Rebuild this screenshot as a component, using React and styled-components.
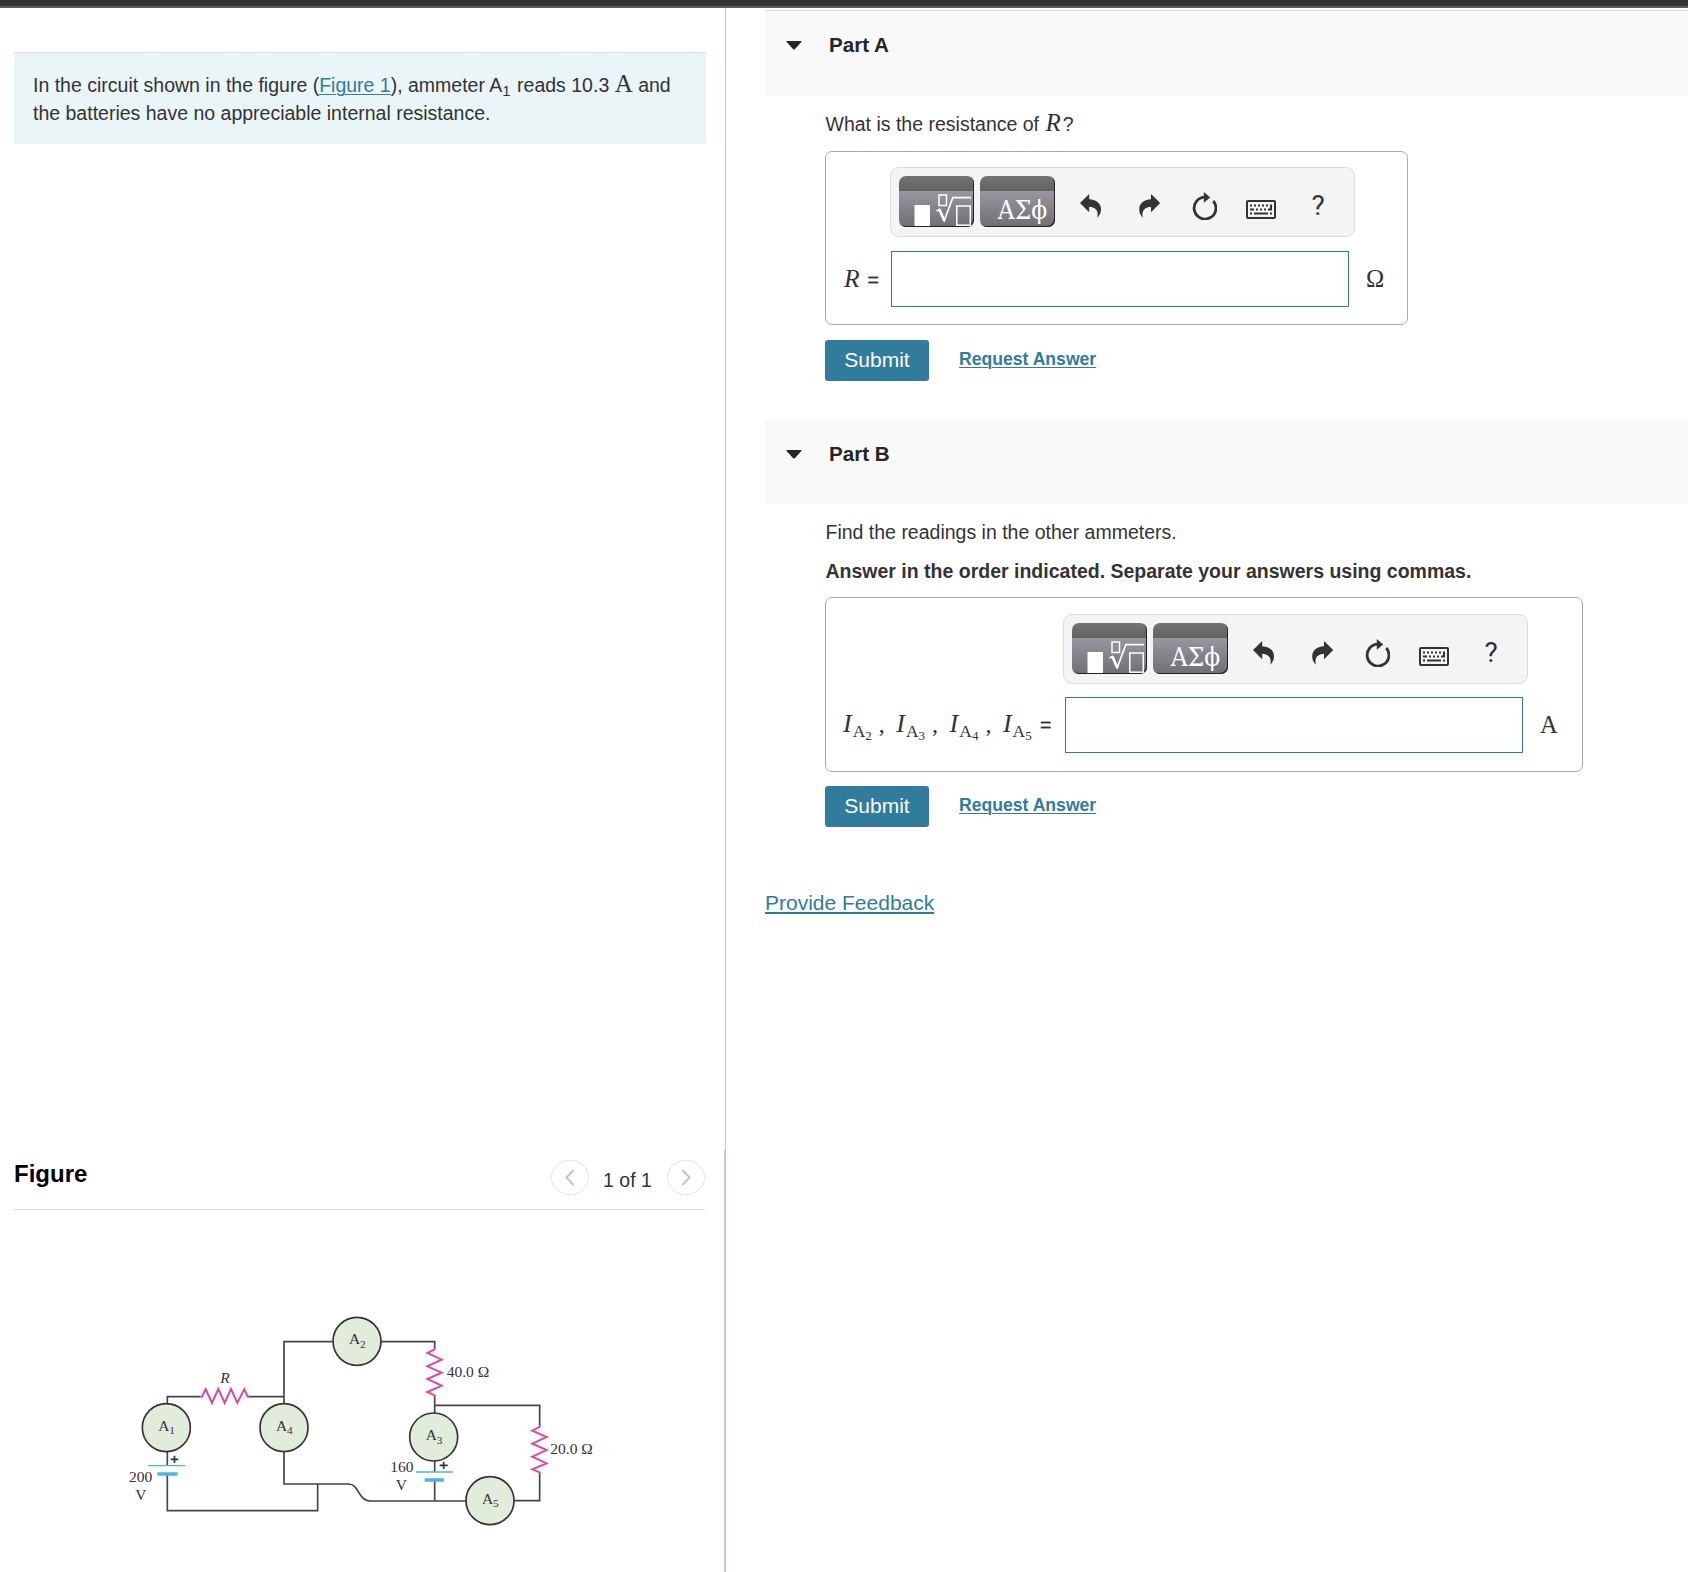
import React from "react";
import styled, { createGlobalStyle } from "styled-components";

export default function App() {
  return (
    <>
      <GlobalStyle />
      <TopBar />
      <Page>
        <LeftPanel>
          <Problem>
            <Intro>
              In the circuit shown in the figure (<Link href="#figure">Figure 1</Link>), ammeter A<Sub>1</Sub> reads 10.3{" "}
              <Math $size={25}>A</Math> and
              <br />
              the batteries have no appreciable internal resistance.
            </Intro>
          </Problem>
          <FigurePane id="figure">
            <FigureHeader>
              <h2>Figure</h2>
              <Pager>
                <PagerButton aria-label="Previous">
                  <svg width="10" height="17" viewBox="0 0 10 17">
                    <path d="M8.5 1 L1.5 8.5 L8.5 16" />
                  </svg>
                </PagerButton>
                <span>1 of 1</span>
                <PagerButton aria-label="Next">
                  <svg width="10" height="17" viewBox="0 0 10 17">
                    <path d="M1.5 1 L8.5 8.5 L1.5 16" />
                  </svg>
                </PagerButton>
              </Pager>
            </FigureHeader>
            <Circuit />
          </FigurePane>
        </LeftPanel>

        <RightPanel>
          <PartHeader title="Part A" height={86} bordered />
          <PartBody $top={16}>
            <Question>
              What is the resistance of <Math $size={25} $italic $wide>R</Math>?
            </Question>
            <AnswerBox $width={583} $height={174} $top={15} $pad={15}>
              <Toolbar inset={28} />
              <AnswerRow $gap={14}>
                <AnswerLabel $width={48}>
                  <Math $size={25.5} $italic $wide>R</Math>
                  <Equals $left={6}>=</Equals>
                </AnswerLabel>
                <AnswerInput />
                <Unit>Ω</Unit>
              </AnswerRow>
            </AnswerBox>
            <Actions gap={15} />
          </PartBody>

          <Spacer $height={39} />

          <PartHeader title="Part B" height={84} />
          <PartBody $top={16}>
            <Question>Find the readings in the other ammeters.</Question>
            <Instruction>Answer in the order indicated. Separate your answers using commas.</Instruction>
            <AnswerBox $width={758} $height={175} $top={14} $pad={16}>
              <Toolbar inset={29} />
              <AnswerRow $gap={13}>
                <AnswerLabel $width={222}>
                  {[2, 3, 4, 5].map((n) => (
                    <Current key={n} index={n} last={n === 5} />
                  ))}
                  <Equals $left={0}>=</Equals>
                </AnswerLabel>
                <AnswerInput />
                <Unit>A</Unit>
              </AnswerRow>
            </AnswerBox>
            <Actions gap={14} />
          </PartBody>

          <Feedback href="#feedback">Provide Feedback</Feedback>
        </RightPanel>
      </Page>
    </>
  );
}

function PartHeader({ title, height, bordered }) {
  return (
    <PartHeaderStyle $height={height} $bordered={bordered}>
      <svg width="16" height="9" viewBox="0 0 16 9">
        <path d="M1 0 H15 Q16 0 15.4 1 L8.8 8.3 Q8 9 7.2 8.3 L0.6 1 Q0 0 1 0 Z" fill="#252525" />
      </svg>
      <h3>{title}</h3>
    </PartHeaderStyle>
  );
}

function Current({ index, last }) {
  return (
    <CurrentStyle>
      <Math $size={26} $italic>I</Math>
      <span className="name">A</span>
      <span className="index">{index}</span>
      {!last && <span className="comma">,</span>}
    </CurrentStyle>
  );
}

function Actions({ gap }) {
  return (
    <ActionsStyle $top={gap}>
      <Submit>Submit</Submit>
      <Request href="#answer">Request Answer</Request>
    </ActionsStyle>
  );
}

function Toolbar({ inset }) {
  return (
    <ToolbarStyle $inset={inset}>
      <Palette aria-label="Templates">
        <svg width="75" height="51" viewBox="0 0 75 51">
          <rect x="15.5" y="29" width="15.5" height="21" fill="#fff" />
          <g fill="none" stroke="#fff">
            <rect x="40" y="19" width="7.5" height="10.5" strokeWidth="1.5" />
            <path d="M37.5 35 L40.5 33.5 L45.3 44.5 L53.8 21.7 H72" strokeWidth="1.7" />
            <path d="M40.5 33.5 L45.3 45" strokeWidth="2.6" />
            <rect x="57.8" y="30" width="13.5" height="19.2" strokeWidth="1.5" />
          </g>
        </svg>
      </Palette>
      <Palette aria-label="Symbols">
        <span>ΑΣϕ</span>
      </Palette>
      <Tool $left={25} $top={18} aria-label="Undo">
        <svg width="22" height="24" viewBox="0 0 22 24">
          <path d="M0 9 L9.2 0 V5.3 C16.5 5.6 21 9.5 21 15.5 C21 19 19.5 21.5 17.2 23.7 C18.3 20 18.4 13.3 9.2 12.7 V18.3 Z" />
        </svg>
      </Tool>
      <Tool $left={37} $top={18} aria-label="Redo">
        <svg width="22" height="24" viewBox="0 0 22 24">
          <path d="M21.2 9 L12 0 V5.3 C4.7 5.6 0.2 9.5 0.2 15.5 C0.2 19 1.5 21.5 4 23.7 C2.9 20 2.8 13.3 12 12.7 V18.3 Z" />
        </svg>
      </Tool>
      <Tool $left={31} $top={16} aria-label="Reset">
        <svg width="25" height="28" viewBox="0 0 25 28">
          <path d="M13 5.2 A10.9 10.9 0 1 0 21.3 9" fill="none" stroke="#333" strokeWidth="2.8" />
          <path d="M11.8 0 L18.2 5.5 L11.8 10.8 Z" />
        </svg>
      </Tool>
      <Tool $left={29} $top={24} aria-label="Keyboard shortcuts">
        <svg width="30" height="19" viewBox="0 0 30 19">
          <rect x="1" y="1" width="28" height="17" rx="1" fill="none" stroke="#333" strokeWidth="2" />
          <path d="M4 4.5h2v2H4z M8 4.5h2v2H8z M12 4.5h2v2h-2z M16 4.5h2v2h-2z M20 4.5h2v2h-2z M24 4.5h2v6h-4v-2h2z" />
          <path d="M4 8.5h4v2H4z M10 8.5h2v2h-2z M14 8.5h2v2h-2z M18 8.5h2v2h-2z" />
          <path d="M4 12.5h2v2H4z M8 12.5h14v2H8z M24 12.5h2v2h-2z" />
        </svg>
      </Tool>
      <Help $left={35.5} $top={13}>?</Help>
    </ToolbarStyle>
  );
}

const ammeters = [
  { n: 1, x: 169, y: 413 },
  { n: 2, x: 741, y: 154 },
  { n: 3, x: 971, y: 441 },
  { n: 4, x: 522, y: 413 },
  { n: 5, x: 1140, y: 632 },
];

function Circuit() {
  return (
    <CircuitStyle width="520" height="250" viewBox="0 0 1560 750">
      <g className="wire">
        <path d="M172 345 V320 H270 M414 320 H522" />
        <path d="M522 345 V155 H668 M812 155 H974 V175" />
        <path d="M522 485 V582 H715 C750 582 740 633 785 633 H1070" />
        <path d="M623 582 V662 H172 V552 M172 485 V527" />
        <path d="M974 318 V372 M974 346 H1289 V408 M1289 548 V632 H1210" />
        <path d="M974 512 V546 M974 570 V633" />
      </g>
      <g className="resistor">
        <path d="M268 320 H276 L287 297 L306 339 L325 297 L344 339 L363 297 L382 339 L403 297 L413 320 H420" />
        <path d="M974 172 V178 L952 189 L995 209 L952 229 L995 248 L952 267 L995 287 L952 306 L974 316 V322" />
        <path d="M1289 405 V411 L1267 422 L1310 441 L1267 461 L1310 480 L1267 500 L1310 520 L1267 538 L1289 547 V552" />
      </g>
      <g stroke="#4cb5e8">
        <path d="M115 527 H225 M918 546 H1029" strokeWidth="4" />
        <path d="M142 552 H203 M944 570 H1002" strokeWidth="10" />
      </g>
      <path d="M182 508 H205 M193.5 497 V519 M989 526 H1013 M1001 515 V537" stroke="#333" strokeWidth="5" />
      {ammeters.map(({ n, x, y }) => (
        <g key={n}>
          <circle cx={x} cy={y} r="72" />
          <text x={x - 24} y={y + 9}>A</text>
          <text x={x + 9} y={y + 20} className="small">{n}</text>
        </g>
      ))}
      <text x="331" y="279" fontStyle="italic">R</text>
      <text x="57" y="575">200</text>
      <text x="76" y="631">V</text>
      <text x="841" y="545">160</text>
      <text x="857" y="599">V</text>
      <text x="1010" y="262">40.0 Ω</text>
      <text x="1321" y="493">20.0 Ω</text>
    </CircuitStyle>
  );
}

const GlobalStyle = createGlobalStyle`
  * {
    box-sizing: border-box;
  }

  body {
    margin: 0;
    background: #fff;
    color: #333;
    font-family: "Liberation Sans", Arial, sans-serif;
    font-size: 19.5px;
    line-height: 24px;
    overflow: hidden;
  }

  h2, h3, p {
    margin: 0;
  }

  button {
    padding: 0;
    font-family: inherit;
  }
`;

const TopBar = styled.div`
  height: 8px;
  background: #323232;
  border-bottom: 2px solid #5c5c5c;
`;

const Page = styled.div`
  display: flex;
  height: 1564px;
`;

const LeftPanel = styled.div`
  display: flex;
  flex-direction: column;
  width: 726px;
`;

const Problem = styled.div`
  height: 1142px;
  padding: 44px 19px 0 14px;
  border-right: 1px solid #c0cad8;
`;

const Intro = styled.p`
  height: 92px;
  padding: 18px 0 0 19px;
  border-top: 1px solid #dcdcdc;
  background: #eaf5f7;
  line-height: 28px;
  white-space: nowrap;
`;

const Link = styled.a`
  color: #317b9c;
  text-underline-offset: 2px;
  text-decoration-thickness: 1px;
`;

const Sub = styled.sub`
  margin-right: 1px;
  font-size: 15px;
  line-height: 0;
  vertical-align: -4px;
`;

const Math = styled.span`
  margin-right: ${(p) => (p.$wide ? 2 : 0)}px;
  margin-left: ${(p) => (p.$wide ? 1 : 0)}px;
  font-family: "Liberation Serif", "Times New Roman", serif;
  font-size: ${(p) => p.$size}px;
  font-style: ${(p) => (p.$italic ? "italic" : "normal")};
  line-height: 0;
`;

const FigurePane = styled.div`
  flex: 1;
  padding: 0 19px 0 14px;
  border-right: 2px solid #bfcad8;
`;

const FigureHeader = styled.div`
  display: flex;
  justify-content: space-between;
  height: 60px;
  border-bottom: 1px solid #dcdcdc;

  h2 {
    margin-top: 10px;
    color: #000;
    font-size: 24px;
    line-height: 28px;
  }
`;

const Pager = styled.div`
  display: flex;
  align-items: flex-start;
  padding-top: 10px;

  span {
    width: 78px;
    padding: 8px 1px 0 0;
    text-align: center;
  }
`;

const PagerButton = styled.button`
  display: flex;
  align-items: center;
  justify-content: center;
  width: 38px;
  height: 35px;
  border: 1px solid #e6e6e6;
  border-radius: 50%;
  background: #fff;

  path {
    fill: none;
    stroke: #c4c4c4;
    stroke-width: 2;
  }
`;

const CircuitStyle = styled.svg`
  display: block;
  margin: 80px 0 0 96px;
  overflow: visible;

  .wire path {
    fill: none;
    stroke: #444;
    stroke-width: 5;
  }

  .resistor path {
    fill: none;
    stroke: #dc4b9c;
    stroke-width: 6;
  }

  circle {
    fill: #e2ecda;
    stroke: #333;
    stroke-width: 5;
  }

  text {
    fill: #333;
    font-family: "Liberation Serif", "Times New Roman", serif;
    font-size: 46.5px;
  }

  .small {
    font-size: 34px;
  }
`;

const RightPanel = styled.div`
  flex: 1;
  padding: 2px 0 0 39px;
`;

const PartHeaderStyle = styled.div`
  display: flex;
  align-items: flex-start;
  height: ${(p) => p.$height}px;
  padding: 22px 0 0 21px;
  border-top: ${(p) => (p.$bordered ? "1px solid #dcdcdc" : "none")};
  background: #f9f9f9;

  svg {
    margin: 8px 27px 0 0;
  }

  h3 {
    color: #252525;
    font-size: 20.6px;
    line-height: 24px;
  }
`;

const PartBody = styled.div`
  padding: ${(p) => p.$top}px 0 0 60px;
`;

const Question = styled.p`
  height: 24px;
  padding-left: 0.5px;
`;

const Instruction = styled.p`
  margin-top: 15px;
  padding-left: 0.5px;
  font-weight: bold;
`;

const AnswerBox = styled.div`
  width: ${(p) => p.$width}px;
  height: ${(p) => p.$height}px;
  margin-top: ${(p) => p.$top}px;
  padding: ${(p) => p.$pad}px 0 0 17px;
  border: 1px solid #a9a9a9;
  border-radius: 7px;
  display: grid;
  align-content: start;
  justify-content: start;
`;

const ToolbarStyle = styled.div`
  display: flex;
  align-items: flex-start;
  justify-self: end;
  width: 465px;
  height: 70px;
  margin-right: ${(p) => p.$inset}px;
  padding: 8px;
  border: 1px solid #dcdcdc;
  border-radius: 9px;
  background: #f4f4f4;
`;

const Palette = styled.button`
  flex: none;
  width: 75px;
  height: 51px;
  overflow: hidden;
  border: 0;
  border-radius: 7px;
  background: linear-gradient(#747474, #626262 15px, #98969f 15px, #706f73);
  box-shadow: inset -1px -1px 0 #222;
  color: #fff;

  & + & {
    margin-left: 6px;
  }

  svg {
    display: block;
  }

  span {
    display: block;
    padding: 13px 0 0 10px;
    font-family: "DejaVu Serif Condensed", "DejaVu Serif", "Liberation Serif", serif;
    font-size: 26px;
    line-height: 42px;
  }
`;

const Tool = styled.button`
  flex: none;
  margin: ${(p) => p.$top}px 0 0 ${(p) => p.$left}px;
  border: 0;
  background: none;
  color: #333;

  svg {
    display: block;
    fill: #333;
  }
`;

const Help = styled(Tool)`
  font-family: Roboto, sans-serif;
  font-size: 28px;
  line-height: 34px;
`;

const AnswerRow = styled.div`
  display: flex;
  align-items: center;
  margin-top: ${(p) => p.$gap}px;
`;

const AnswerLabel = styled.div`
  display: flex;
  align-items: baseline;
  width: ${(p) => p.$width}px;
  padding-top: 1px;
  white-space: nowrap;
`;

const Equals = styled.span`
  margin-left: ${(p) => p.$left}px;
  -webkit-text-stroke: 0.4px #333;
`;

const CurrentStyle = styled.span`
  width: 53.3px;
  line-height: 24px;
  font-family: "Liberation Serif", "Times New Roman", serif;

  &:nth-child(4) {
    width: 37px;
  }

  .name {
    margin-left: 1px;
    font-size: 17.5px;
    line-height: 0;
    vertical-align: -5px;
  }

  .index {
    font-size: 13px;
    line-height: 0;
    vertical-align: -8px;
  }

  .comma {
    margin-left: 7px;
    font-size: 24px;
    line-height: 0;
  }
`;

const AnswerInput = styled.input`
  width: 458px;
  height: 56px;
  padding: 0 10px;
  border: 1px solid #317b9c;
  border-radius: 0;
  background: #fff;
  font-size: 20px;
`;

const Unit = styled.span`
  width: 34px;
  padding-left: 17px;
  font-family: "Liberation Serif", "Times New Roman", serif;
  font-size: 24.5px;
`;

const ActionsStyle = styled.div`
  display: flex;
  align-items: center;
  margin-top: ${(p) => p.$top}px;
`;

const Submit = styled.button`
  width: 104px;
  height: 41px;
  padding-bottom: 1px;
  border: 0;
  border-radius: 3px;
  background: #317b9c;
  color: #fff;
  font-size: 21px;
`;

const Request = styled(Link)`
  margin: 0 0 3px 30px;
  font-size: 17.6px;
  font-weight: bold;
`;

const Spacer = styled.div`
  height: ${(p) => p.$height}px;
`;

const Feedback = styled(Link)`
  display: inline-block;
  margin-top: 64px;
  font-size: 21px;
  text-decoration-thickness: 2px;
`;
